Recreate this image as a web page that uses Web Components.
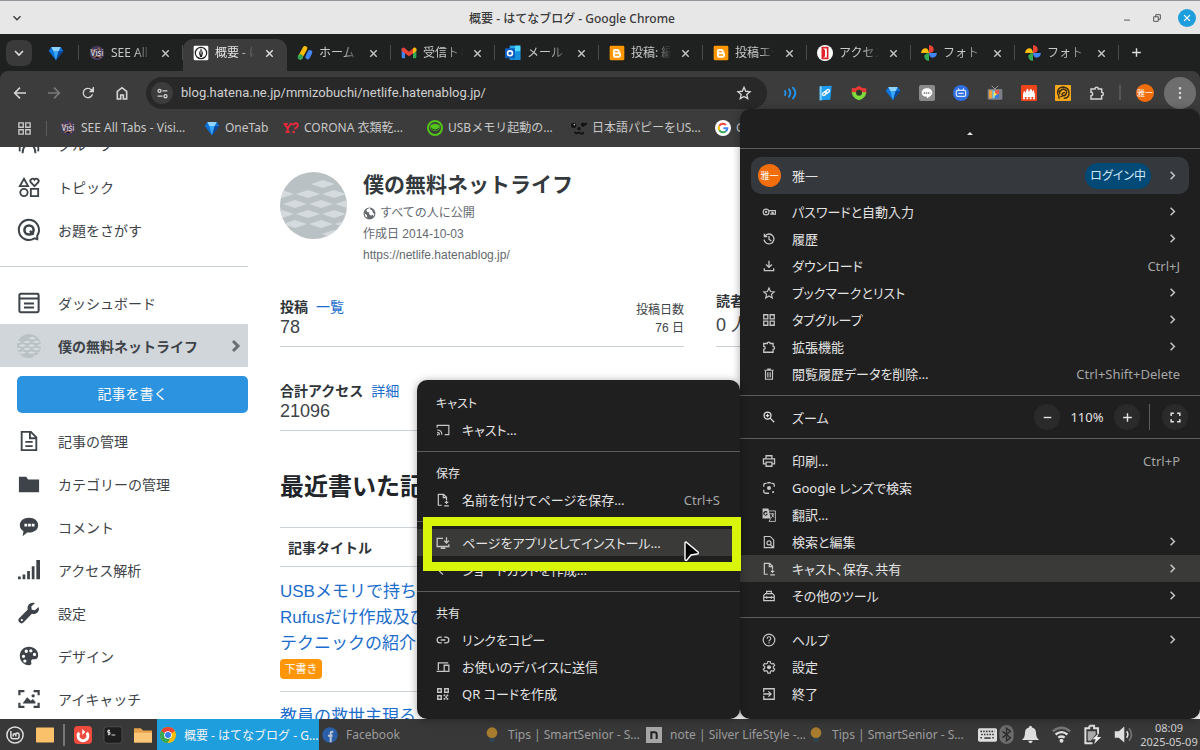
<!DOCTYPE html>
<html lang="ja">
<head>
<meta charset="utf-8">
<title>概要 - はてなブログ</title>
<style>
  :root {
    --ui-font: "Noto Sans", "Noto Sans CJK JP", sans-serif;
    --page-font: "Liberation Sans", "Noto Sans CJK JP", sans-serif;
    --chrome-bg: #3c3c3c;
    --menu-bg: #1f1f1f;
    --menu-line: #5c5c5c;
    --link: #1a6dcc;
  }

  body {
    margin: 0;
    height: 100vh;
    display: flex;
    flex-direction: column;
    position: relative;
    overflow: hidden;
    background: #fff;
    font-family: var(--ui-font);
    font-size: 12px;
  }

  blog-page {
    flex: 1;
    min-height: 0;
  }

  /* everything below floats over the window */
  .app-menu { position: absolute; top: 109px; right: 0; width: 460px; }
  .sub-menu { position: absolute; top: 380px; right: 460px; width: 323px; }
  .app-menu menu-group { --group-top: 8px; }
  click-target { position: absolute; top: 517px; right: 459px; width: 318px; height: 54px; }
  mouse-cursor { position: absolute; top: 541px; right: 500px; }
</style>
</head>
<body>

<title-bar>概要 - はてなブログ - Google Chrome</title-bar>

<tab-strip>
  <browser-tab pinned icon="gem" title="OneTab"></browser-tab>
  <browser-tab icon="visi">SEE All T</browser-tab>
  <browser-tab active icon="hatena">概要 - は</browser-tab>
  <browser-tab icon="adsense">ホーム - </browser-tab>
  <browser-tab icon="gmail">受信トレ</browser-tab>
  <browser-tab icon="outlook">メール - </browser-tab>
  <browser-tab icon="blogger">投稿: 編</browser-tab>
  <browser-tab icon="blogger">投稿エデ</browser-tab>
  <browser-tab icon="access">アクセス</browser-tab>
  <browser-tab icon="photos">フォト - G</browser-tab>
  <browser-tab icon="photos">フォト - G</browser-tab>
</tab-strip>

<tool-bar url="blog.hatena.ne.jp/mmizobuchi/netlife.hatenablog.jp/"></tool-bar>

<bookmark-bar>
  <bookmark-item icon="visi">SEE All Tabs - Visi…</bookmark-item>
  <bookmark-item icon="gem" short>OneTab</bookmark-item>
  <bookmark-item icon="yahoo">CORONA 衣類乾…</bookmark-item>
  <bookmark-item icon="frog">USBメモリ起動の…</bookmark-item>
  <bookmark-item icon="puppy">日本語パピーをUS…</bookmark-item>
  <bookmark-item icon="google">G</bookmark-item>
</bookmark-bar>

<blog-page>
  <side-item slot="nav" icon="group">グループ</side-item>
  <side-item slot="nav" icon="topic">トピック</side-item>
  <side-item slot="nav" icon="odai">お題をさがす</side-item>
  <side-item slot="blog" icon="dashboard">ダッシュボード</side-item>
  <side-item slot="blog" icon="waves" current>僕の無料ネットライフ</side-item>
  <side-item slot="tools" icon="doc">記事の管理</side-item>
  <side-item slot="tools" icon="folder">カテゴリーの管理</side-item>
  <side-item slot="tools" icon="comment">コメント</side-item>
  <side-item slot="tools" icon="bars">アクセス解析</side-item>
  <side-item slot="tools" icon="wrench">設定</side-item>
  <side-item slot="tools" icon="palette">デザイン</side-item>
  <side-item slot="tools" icon="eyecatch">アイキャッチ</side-item>

  <blog-profile></blog-profile>
  <blog-stats></blog-stats>
  <recent-entries></recent-entries>
</blog-page>

<task-bar>
  <task-item icon="chrome" active>概要 - はてなブログ - G…</task-item>
  <task-item icon="facebook">Facebook</task-item>
  <task-item icon="bulb">Tips | SmartSenior - S…</task-item>
  <task-item icon="note">note | Silver LifeStyle -…</task-item>
  <task-item icon="bulb">Tips | SmartSenior - S…</task-item>
</task-bar>

<menu-panel class="app-menu" scrolled>
  <menu-group>
    <profile-row></profile-row>
    <menu-row icon="key" more>パスワードと自動入力</menu-row>
    <menu-row icon="history" more>履歴</menu-row>
    <menu-row icon="download" keys="Ctrl+J">ダウンロード</menu-row>
    <menu-row icon="star" more>ブックマークとリスト</menu-row>
    <menu-row icon="grid" more>タブグループ</menu-row>
    <menu-row icon="puzzle" more>拡張機能</menu-row>
    <menu-row icon="trash" keys="Ctrl+Shift+Delete">閲覧履歴データを削除…</menu-row>
  </menu-group>
  <zoom-row value="110%">ズーム</zoom-row>
  <menu-group>
    <menu-row icon="print" keys="Ctrl+P">印刷…</menu-row>
    <menu-row icon="lens">Google レンズで検索</menu-row>
    <menu-row icon="translate">翻訳…</menu-row>
    <menu-row icon="find" more>検索と編集</menu-row>
    <menu-row icon="savepage" more hot>キャスト、保存、共有</menu-row>
    <menu-row icon="toolbox" more>その他のツール</menu-row>
  </menu-group>
  <menu-group>
    <menu-row icon="help" more>ヘルプ</menu-row>
    <menu-row icon="gear">設定</menu-row>
    <menu-row icon="exit">終了</menu-row>
  </menu-group>
</menu-panel>

<menu-panel class="sub-menu">
  <menu-group heading="キャスト">
    <menu-row icon="cast" compact>キャスト…</menu-row>
  </menu-group>
  <menu-group heading="保存">
    <menu-row icon="savepage" compact keys="Ctrl+S">名前を付けてページを保存…</menu-row>
  </menu-group>
  <menu-group>
    <menu-row icon="install" compact hot>ページをアプリとしてインストール…</menu-row>
    <menu-row icon="shortcut" compact>ショートカットを作成…</menu-row>
  </menu-group>
  <menu-group heading="共有">
    <menu-row icon="link" compact>リンクをコピー</menu-row>
    <menu-row icon="devices" compact>お使いのデバイスに送信</menu-row>
    <menu-row icon="qr" compact>QR コードを作成</menu-row>
  </menu-group>
</menu-panel>

<click-target></click-target>
<mouse-cursor></mouse-cursor>

<script>
const line = (d, w = 2) => `<path d="${d}" fill="none" stroke="currentColor" stroke-width="${w}"/>`;
const solid = (d, c = "currentColor") => `<path d="${d}" fill="${c}" fill-rule="evenodd"/>`;
const rhomb = (x, y) => `M${x - 12} ${y}l12-4 12 4-12 4z`;

// every icon sits in a 24 unit box
const ICONS = {
  // window and toolbar
  chevdown: line("M6 9l6 6 6-6", 2.4),
  chevright: line("M9 6l6 6-6 6", 2.4),
  min: line("M5 17h14", 2),
  restore: line("M4 9h11v11H4zM9 9V4h11v11h-5", 2),
  close: line("M5 5l14 14M19 5L5 19", 3),
  plus: line("M12 4v16M4 12h16", 2.6),
  minus: line("M5 12h14", 2.6),
  back: line("M21 12H4M12 4l-8 8 8 8", 2.4),
  forward: line("M3 12h17M12 4l8 8-8 8", 2.4),
  reload: solid("M17.65 6.35A7.96 7.96 0 0 0 12 4a8 8 0 1 0 7.73 10h-2.08A6 6 0 1 1 12 6c1.66 0 3.14.69 4.22 1.78L13 11h7V4z") + line("M20 3v8", 2),
  home: line("M5 21V9.500l7-5.500 7 5.500V21h-5v-6h-4v6z", 2.4),
  tune: line("M12 7h9M3 17h9", 2.4) + `<circle cx="6.500" cy="7" r="2.800" fill="none" stroke="currentColor" stroke-width="2.400"/><circle cx="17.500" cy="17" r="2.800" fill="none" stroke="currentColor" stroke-width="2.400"/>`,
  star: line("M12 3.500l2.600 5.900 6.400.6-4.850 4.250L17.600 20.500 12 17.200l-5.600 3.300 1.450-6.250L3 10l6.400-.6z", 2),
  puzzle: line("M3 6h6a2.500 2.500 0 0 1 5 0h5v5a2.500 2.500 0 0 1 0 5v5H3v-5a2.500 2.500 0 0 0 0-5z", 2.2),
  dots: solid("M12 3a2 2 0 1 1 0 4 2 2 0 0 1 0-4zm0 7a2 2 0 1 1 0 4 2 2 0 0 1 0-4zm0 7a2 2 0 1 1 0 4 2 2 0 0 1 0-4z"),
  grid: line("M3 3h7v7H3zM14 3h7v7h-7zM3 14h7v7H3zM14 14h7v7h-7z", 2.2),

  // favicons
  gem: solid("M5 3h14l4 6-11 14L1 9z", "#0d72d8") + solid("M5 3h14l-3 6H8z", "#8fd4ff") + solid("M8 9h8l-4 14z", "#39a7f7") + solid("M16 9h7L12 23z", "#08489a"),
  visi: `<circle cx="12" cy="12" r="11" fill="#423858"/><path d="M4 7l6 3M14 4l3 5M7 19l5-3 6 3" stroke="#a8705a" stroke-width="2"/><text x="12" y="17" font-size="12" fill="#e6e6e6" text-anchor="middle">Visi</text>`,
  hatena: `<rect x="1" y="1" width="22" height="22" rx="2" fill="#fff"/><circle cx="12" cy="12" r="8.500" fill="none" stroke="#222" stroke-width="1.800"/><path d="M12 5l3 7-1.500 6h-3L9 12z" fill="#222"/><path d="M12 8v6" stroke="#fff" stroke-width="1.200"/>`,
  adsense: `<g stroke-linecap="round" stroke-width="7"><path d="M12 5L5 18" stroke="#fbbc04"/><path d="M19.500 11L16 18" stroke="#4285f4"/></g><circle cx="5" cy="18" r="4" fill="#34a853"/>`,
  gmail: solid("M1 5h5v15H3q-2 0-2-2z", "#4285f4") + solid("M18 5h5v13q0 2-2 2h-3z", "#34a853") + solid("M1 6q1-3 4-2l7 6 7-6q3-1 4 2v3l-11 8L1 9z", "#ea4335") + solid("M18 5q4-3 5 1v3l-5 4z", "#fbbc04"),
  outlook: solid("M7 1h16v21H7z", "#28a8ea") + solid("M15 1h8v8h-8z", "#50d9ff") + solid("M7 13l16-4v13H7z", "#1490df") + `<rect x="0" y="5" width="15" height="15" rx="1.500" fill="#0a5ebf"/><circle cx="7.500" cy="12.500" r="3.700" fill="none" stroke="#fff" stroke-width="2.300"/>`,
  blogger: `<rect x="1" y="1" width="22" height="22" rx="2" fill="#ff9800"/><path d="M9 6h4a4 4 0 0 1 3 5h1l1 1v3a4 4 0 0 1-4 4H9a3 3 0 0 1-3-3V9a3 3 0 0 1 3-3z" fill="#fff"/><path d="M9.500 10h3M9.500 15h5" stroke="#ff9800" stroke-width="2" stroke-linecap="round"/>`,
  access: `<circle cx="12" cy="12" r="12" fill="#fff"/><path d="M8 4h8v16H8z" fill="none" stroke="#e0222b" stroke-width="2.500"/><path d="M8 4l4 4v9l-4 3z" fill="#e0222b"/>`,
  photos: solid("M12 12V0q7 1 7 7 0 4-7 5z", "#ea4335") + solid("M12 12h12q-1 7-7 7-4 0-5-7z", "#4285f4") + solid("M12 12v12q-7-1-7-7 0-4 7-5z", "#34a853") + solid("M12 12H0q1-7 7-7 4 0 5 7z", "#fbbc04"),
  yahoo: `<path d="M1 6h6M2 6l5 6 5-6M10 6h4M7 12v6M4 18h6" fill="none" stroke="#f0283c" stroke-width="2.800"/><path d="M15 8q1-3 4-3 4 0 3 4-1 3-5 4" fill="none" stroke="#f0283c" stroke-width="3"/><circle cx="16" cy="18" r="2" fill="#f0283c"/>`,
  frog: `<circle cx="12" cy="12" r="10.500" fill="none" stroke="#52c41a" stroke-width="3"/><path d="M5 8q7-5 14 0v5q-7 7-14 0z" fill="#52c41a"/><path d="M6 12q6 6 12 0" fill="none" stroke="#254d12" stroke-width="1.500"/>`,
  puppy: `<g fill="#111"><circle cx="4" cy="8" r="4"/><circle cx="18" cy="7" r="3"/><circle cx="22" cy="6" r="2"/><circle cx="12" cy="13" r="2.500"/><path d="M5 16q4 5 7 1 4 4 8 0l-1 4q-4 2-7-1-4 3-7 0z"/></g><circle cx="5" cy="7" r="1.200" fill="#bbb"/>`,
  google: `<circle cx="12" cy="12" r="12" fill="#fff"/><g fill="none" stroke-width="3"><path d="M6.500 8.500A6.500 6.500 0 0 1 16.500 7.300" stroke="#ea4335"/><path d="M6.500 8.500a6.500 6.500 0 0 0 0 7" stroke="#fbbc04"/><path d="M6.500 15.500A6.500 6.500 0 0 0 16.300 16.900" stroke="#34a853"/><path d="M12.500 12.500h6a6.500 6.500 0 0 1-2.200 4.400" stroke="#4285f4"/></g>`,

  // extensions
  waves3: `<g fill="none" stroke="#2196f3" stroke-width="2.800" stroke-linecap="round"><path d="M3 9q2 3 0 6M9 6.500q4 5.500 0 11M15 4q7 8 0 16"/></g>`,
  linkbook: `<path d="M4 2l18-1-2 21-16 1z" fill="#1e9cf0"/><path d="M4 2h3v21H4z" fill="#7fd0ff"/><g fill="none" stroke="#fff" stroke-width="2"><rect x="8" y="11" width="7" height="4" rx="2" transform="rotate(-35 11 13)"/><rect x="12" y="8" width="7" height="4" rx="2" transform="rotate(-35 15 10)"/></g>`,
  shield: solid("M1 5q7 0 11-4 4 4 11 4v7H1z", "#e53935") + solid("M1 11h22q-1 9-11 12Q2 20 1 11z", "#7edc3c") + `<circle cx="12" cy="11.500" r="4.500" fill="#2b3a2b"/>`,
  line: `<rect width="24" height="24" rx="3" fill="#8b8b8b"/><path d="M12 5c5 0 8 3 8 6.500S15 18 12 20v-2.500c-5 0-8-2.500-8-6S7 5 12 5z" fill="#fff"/><path d="M7 12h10" stroke="#777" stroke-width="2.500" stroke-dasharray="2 1"/>`,
  robot: `<circle cx="12" cy="12" r="12" fill="#2f6fe0"/><rect x="5" y="8" width="14" height="9" rx="2" fill="none" stroke="#dce8ff" stroke-width="1.800"/><path d="M8 12.500h8M8 5l1 3M16 5l-1 3" stroke="#dce8ff" stroke-width="1.800"/>`,
  tv: `<path d="M7 1l5 5 5-5" fill="none" stroke="#999" stroke-width="1.500"/><rect x="1" y="6" width="22" height="16" rx="2" fill="#7d7f86"/><path d="M3 8h5v12H3z" fill="#f2a23c"/><path d="M8 8h4v12H8z" fill="#6ec6e8"/><path d="M12 8h6v6h-6z" fill="#e95c4b"/><path d="M12 14h6v6h-6z" fill="#3c7cd8"/><path d="M10 10l5 4-5 4z" fill="#f7e463"/>`,
  meter: `<rect width="24" height="24" rx="2" fill="#f0441c"/><path d="M3 15q1-8 3-5l1 2q2-9 4-5l1 4q2-8 4-4l1 3 2-3 2 8v3H3z" fill="#fff"/><path d="M3 20h18" stroke="#fff" stroke-width="3" stroke-dasharray="3 2"/>`,
  brain: `<rect width="24" height="24" rx="1" fill="#f5a81c"/><g fill="none" stroke="#3a2a10" stroke-width="2"><path d="M6 21q1-4-2-8Q3 4 12 3q9 1 9 9 0 8-8 8"/><path d="M7 14q-1-7 6-8 6 2 4 7-2 4-5 3-3-2 0-4l3-1M8 18l4-2M5 10l6-3"/></g>`,

  // blog sidebar
  group: `<circle cx="12" cy="7" r="4" fill="none" stroke="currentColor" stroke-width="2"/>` + line("M5 22q0-9 7-9t7 9M2 20q-1-7 3-10M22 20q1-7-3-10"),
  topic: line("M6.500 3l4.500 8H2z", 2) + `<circle cx="6.500" cy="18" r="4" fill="none" stroke="currentColor" stroke-width="2"/>` + line("M14 14h8v8h-8zM18 11l-4-4a2.400 2.400 0 0 1 4-3 2.400 2.400 0 0 1 4 3z"),
  odai: line("M18 21a11 11 0 1 1 3-3v4z", 2.2) + `<circle cx="12" cy="12" r="5" fill="none" stroke="currentColor" stroke-width="2.800"/>` + line("M13 13l4 4", 2.6),
  dashboard: `<rect x="1.500" y="2" width="21" height="20" rx="1.500" fill="none" stroke="currentColor" stroke-width="2.200"/>` + line("M2 7h20M6.500 12.500h11M6.500 17h11", 2.2),
  waves: `<clipPath id="c"><circle cx="33.500" cy="33.500" r="33.500"/></clipPath><g transform="scale(.3582)" clip-path="url(#c)"><path d="M0 0h67v67H0z" fill="#b9c1c5"/><path fill="#d5dade" d="${[[43, 12], [2, 22], [28, 22], [54, 22], [15, 32], [41, 32], [67, 32], [2, 42], [28, 42], [54, 42], [15, 52], [41, 52], [67, 52], [54, 62]].map(p => rhomb(...p)).join("")}"/></g>`,
  doc: line("M4 2h10l6 6v14H4zM13 2v7h7M8 13h8M8 17.500h8", 2),
  folder: solid("M1 4h8l2 3h12v14H1z"),
  comment: solid("M12 2c6 0 10 3.500 10 8s-4 8-10 8l-2 0-5 4 1-5.500C3.500 15 2 13 2 10c0-4.500 4-8 10-8zM7 8.500v3h3v-3zm4 0v3h3v-3zm4 0v3h3v-3z"),
  bars: solid("M0 19h3v3H0zm5-2h3v5H5zm5-4h3v9h-3zm5-5h3v14h-3zm5-7h4v21h-4z"),
  wrench: solid("M22.500 5.500L18.500 9l-3.500-.5L14.500 5l4-3.700c-3-1-6 0-7.500 2.700-.8 1.500-.8 3-.3 4.300L1.500 17.500a3 3 0 0 0 4.700 4.700l9-9.300c4 1.300 9-2 7.300-7.400zM4.200 18.500a1.200 1.200 0 1 1 0 2.400 1.200 1.200 0 0 1 0-2.400z"),
  palette: solid("M12 2C6 2 2 6.500 2 12s4 10 10 10c2 0 3-1 2.500-3-.5-2 0-3.500 2-3.500H19c2 0 3-2 3-4.500C22 6 18 2 12 2zM6 10.500a1.800 1.800 0 1 1 0 3.600 1.800 1.800 0 0 1 0-3.600zm1.500 5.200a1.800 1.800 0 1 1 0 3.600 1.800 1.800 0 0 1 0-3.600zM9 5a1.800 1.800 0 1 1 0 3.600A1.800 1.800 0 0 1 9 5zm5-.5a1.800 1.800 0 1 1 0 3.600 1.800 1.800 0 0 1 0-3.600zm4 4a1.800 1.800 0 1 1 0 3.600 1.800 1.800 0 0 1 0-3.600z"),
  eyecatch: line("M1.500 8V3.500H7M17 3.500h5.500V8M22.500 16v4.500H17M7 20.500H1.500V16", 2.4) + solid("M5 17l5-7 4 4 2-2 3 3v2z") + `<circle cx="16.500" cy="8.500" r="1.800" fill="currentColor"/>`,
  globe: solid("M12 1a11 11 0 1 1 0 22 11 11 0 0 1 0-22zM9 3L6 6l2 3 4 1-1 3 4 3 3-2 1 4 2-5-3-3-1-4-3-1-1-3zM3 11l4 4 1 5-4-3z"),

  // menu
  key: `<circle cx="7" cy="12" r="5" fill="none" stroke="currentColor" stroke-width="2"/><circle cx="7" cy="12" r="2" fill="currentColor"/>` + line("M12 9.500h11v6h-4v-3h-2v3h-3", 2),
  history: line("M5 7a8.500 8.500 0 1 1-1.500 6M4 3v5h5M12 7v5.500l4 3", 2.2),
  download: line("M12 3v11M7 9.500l5 5 5-5M4 16v4h16v-4", 2.2),
  trash: line("M6 7v14h12V7M4 5.500h16M9 3.500h6M10 9v9M14 9v9", 2),
  zoomin: `<circle cx="9.500" cy="9.500" r="6" fill="none" stroke="currentColor" stroke-width="2.200"/>` + line("M14 14l7 7M9.500 6.500v6M6.500 9.500h6", 2),
  full: line("M4 9V4h5M15 4h5v5M20 15v5h-5M9 20H4v-5", 2.8),
  print: line("M7 8V3h10v5M6 17H2.500V8.500h19V17H18M7 14h10v7H7z", 2.2),
  lens: line("M8 4H6a3 3 0 0 0-3 3v3M16 4h2a3 3 0 0 1 3 3v3M3 15v3a3 3 0 0 0 3 3h6M9 3h6", 2.2) + `<circle cx="12" cy="12" r="3.500" fill="currentColor"/><circle cx="19" cy="19" r="1.800" fill="currentColor"/>`,
  translate: solid("M1 1h10l4 17H1zM9.500 7A4 4 0 1 0 10 10H6.500v1.500h1.700A2.300 2.300 0 1 1 8 8z") + line("M12 5h11v18H12l3-5M13 10h8M17 9q1 6 4 7M20 11q-1 4-5 6", 1.5),
  find: line("M4 2.500h10l6 6v13H4z", 2) + `<circle cx="12" cy="13.500" r="3.500" fill="none" stroke="currentColor" stroke-width="2"/>` + line("M14 16l5 5", 2),
  savepage: line("M10 21H4V2.500h9l5 5V12M12.500 3v5H18M18 13v6M15 16h6M14 22h8", 2.1),
  toolbox: line("M3 20V11l3-3h12l3 3v9zM8 8V4h8v4M3 14.500h18M8 12.500v4M16 12.500v4", 2.1),
  help: `<circle cx="12" cy="12" r="10" fill="none" stroke="currentColor" stroke-width="2"/>` + line("M9 10q0-3.500 3-3.500t3 3q0 1.500-1.500 2.500T12 14.500M12 16v2.200", 1.900),
  gear: line("M10 2.500h4l.6 3 2.200 1.300 2.900-1 2 3.500-2.300 2v2.400l2.300 2-2 3.500-2.900-1-2.200 1.300-.6 3h-4l-.6-3-2.200-1.300-2.900 1-2-3.500 2.300-2v-2.400l-2.300-2 2-3.500 2.900 1 2.200-1.300z", 2) + `<circle cx="12" cy="12.500" r="3.500" fill="currentColor"/>`,
  exit: line("M3 9V3h18v18H3v-6M2 12h13M11 7.500l4.500 4.500-4.500 4.500", 2.2),
  cast: line("M2 8V4h20v16h-7M2 12q8 0 8 8M2 16q4 0 4 4", 2) + `<circle cx="3" cy="20" r="1.500" fill="currentColor"/>`,
  install: line("M12 4H2v14h20v-4M8 21h8M18 2v9M14 8l4 4 4-4", 2.2),
  shortcut: line("M6 4v10l6 6", 2.2),
  link: line("M10 7H7a5 5 0 0 0 0 10h3M14 7h3a5 5 0 0 1 0 10h-3M8 12h8", 2.2),
  devices: line("M4 17V5h17M1 19.500h12M14 9h8v10.500h-8z", 2.2),
  qr: line("M3 3h6v6H3zM15 3h6v6h-6zM3 15h6v6H3z", 2.4) + solid("M13 13h3v3h-3zm5 0h3v3h-3zm-2 3h3v3h-3zm-3 3h3v3h-3zm5 0h3v3h-3z"),

  // task bar
  mint: `<circle cx="12" cy="12" r="10.800" fill="none" stroke="#dedede" stroke-width="2"/><path d="M6.500 6.500v7.500q0 3 3 3h5q3 0 3-3v-2.500a2.200 2.200 0 0 0-4.400 0V14M13.100 11.500a2 2 0 0 0-3.500 0V14" fill="none" stroke="#dedede" stroke-width="2"/>`,
  square: `<rect x="0" y="2" width="24" height="20" rx="1" fill="#fbc06a"/>`,
  redring: `<rect width="24" height="24" rx="5" fill="#ee4b3e"/><path d="M7 9a6.500 6.500 0 1 0 10 0" fill="none" stroke="#fff" stroke-width="4"/><path d="M11 4l4 4-4 4z" fill="#fff"/>`,
  terminal: `<rect y="1" width="24" height="22" rx="4" fill="#1d1d1d" stroke="#555"/><path d="M8 6H5v2.500h3V11H5M6.500 4.500v8M10 12h5" fill="none" stroke="#ddd" stroke-width="1.300"/>`,
  files: solid("M0 3h9l3 3h12v16H0z", "#e6a24c") + solid("M0 9h24v13H0z", "#fbc678"),
  chrome: `<circle cx="12" cy="12" r="12" fill="#fbbc04"/>` + solid("M12 12L1.600 6A12 12 0 0 1 22.400 6z", "#ea4335") + solid("M12 12L1.600 6A12 12 0 0 0 11 24l6-9z", "#34a853") + `<circle cx="12" cy="12" r="5.800" fill="#fff"/><circle cx="12" cy="12" r="4.500" fill="#3b7ded"/>`,
  facebook: `<circle cx="12" cy="12" r="11.500" fill="#2a5fa8"/><path d="M17 7h-2q-2 0-2 2v14M9 13h7" fill="none" stroke="#b8c4d4" stroke-width="3"/>`,
  bulb: `<circle cx="12" cy="8.500" r="8" fill="#a87c2e"/><path d="M8 18h8M9 21h6" stroke="#2b4a5c" stroke-width="2"/>`,
  note: `<rect width="24" height="24" fill="#a6a6a6"/><path d="M8 18V8h5q3 0 3 3v7" fill="none" stroke="#222" stroke-width="3"/>`,
  keyboard: `<rect x="0" y="4" width="24" height="17" rx="2" fill="#dedede"/><path d="M3 8h18M4 12h17M3 16h3M18 16h3" stroke="#3a3a3a" stroke-width="2" stroke-dasharray="2 1.500"/><path d="M8 16.500h8" stroke="#3a3a3a" stroke-width="2"/>`,
  bluetooth: `<rect x="3" y="0" width="18" height="24" rx="9" fill="#6c6c6c"/><path d="M7 8l10 8-5 4V4l5 4-10 8" fill="none" stroke="#2e2e2e" stroke-width="1.800"/>`,
  bell: `<path d="M12 1q2 0 2 2 5 1 5 7 0 6 4 9H1q4-3 4-9 0-6 5-7 0-2 2-2zM9 20h6q-1 3-3 3t-3-3z" fill="#dedede"/>`,
  wifi: `<path d="M1 8q11-9 22 0" fill="none" stroke="#777" stroke-width="3"/><path d="M4.500 12q7.500-6 15 0M8 16q4-3 8 0" fill="none" stroke="#dedede" stroke-width="3"/><circle cx="12" cy="20" r="2.500" fill="#dedede"/>`,
  battery: `<path d="M8 1h6v3h5v7M12 23H3V4h5V1" fill="none" stroke="#dedede" stroke-width="2.500"/><path d="M6 8h10v4l-6 8H6z" fill="#aaa"/><path d="M20 10l-8 8h4l-2 6 9-9h-5z" fill="#eee"/>`,
  volume: `<path d="M1 8h5l7-6v20l-7-6H1z" fill="#dedede"/><path d="M16 8q3 4 0 8" fill="none" stroke="#dedede" stroke-width="2"/><path d="M19 4q6 8 0 16" fill="none" stroke="#777" stroke-width="2"/>`
};

// small helper: each element is a shadow root filled from one markup function
const define = (tag, render) => {
  customElements.define(tag, class extends HTMLElement {
    constructor() {
      super();
      this.attachShadow({ mode: "open" });
    }

    connectedCallback() {
      const temp = document.createElement("template");
      temp.innerHTML = render(this);
      this.shadowRoot.replaceChildren(temp.content.cloneNode(true));
    }
  });
};

define("ui-icon", el => `
<style>
  :host { display: inline-block; flex: none; width: var(--icon, 16px); height: var(--icon, 16px); }
  svg { display: block; width: 100%; height: 100%; overflow: visible; }
</style>
<svg viewBox="0 0 24 24" aria-hidden="true">${ICONS[el.getAttribute("name")] || ""}</svg>
`);

define("title-bar", () => `
<style>
  :host {
    display: flex;
    align-items: center;
    flex: none;
    height: 34px;
    box-sizing: border-box;
    border-top: 1px solid #94949a;
    background: #e7e7e7;
    color: #3a3a3a;
  }
  .left { width: 34px; display: flex; justify-content: center; --icon: 14px; }
  h1 { flex: 1; margin: 0; font-size: 12px; font-weight: 500; text-align: center; white-space: nowrap; }
  .right { width: 86px; padding-right: 4px; display: flex; justify-content: flex-end; gap: 12px; --icon: 10px; }
  button { all: unset; width: 18px; height: 18px; display: grid; place-items: center; }
  .close { border-radius: 50%; background: #1f9ede; color: #fff; }
</style>
<div class="left"><button aria-label="menu"><ui-icon name="chevdown"></ui-icon></button></div>
<h1><slot></slot></h1>
<div class="right">
  <button aria-label="minimize"><ui-icon name="min"></ui-icon></button>
  <button aria-label="restore"><ui-icon name="restore"></ui-icon></button>
  <button class="close" aria-label="close"><ui-icon name="close"></ui-icon></button>
</div>
`);

// runs on under the toolbar so that its round corners show the strip
define("tab-strip", () => `
<style>
  :host { display: flex; flex: none; align-items: center; height: 37px; padding: 0 0 8px 6px; margin-bottom: -8px; background: #1f2020; color: #ddd; }
  button { all: unset; flex: none; display: grid; place-items: center; width: 26px; height: 26px; border-radius: 8px; }
  .search { background: #3a3a3a; --icon: 16px; }
  .new { margin-left: 4px; --icon: 13px; }
</style>
<button class="search" aria-label="search tabs"><ui-icon name="chevdown"></ui-icon></button>
<slot></slot>
<button class="new" aria-label="new tab"><ui-icon name="plus"></ui-icon></button>
`);

define("browser-tab", el => `
<style>
  :host {
    display: flex;
    align-items: center;
    flex: 0 1 104px;
    min-width: 0;
    height: 32px;
    align-self: flex-end;
    box-sizing: border-box;
    padding: 0 10px 4px;
    gap: 6px;
    position: relative;
    color: #c8c8c8;
  }
  :host::after { content: ""; position: absolute; right: 0; top: 6px; width: 1px; height: 15px; background: #4a4a4a; }
  :host([pinned]) { flex: none; width: 47px; justify-content: center; }
  :host([active]) { background: var(--chrome-bg); border-radius: 10px 10px 0 0; color: #e3e3e3; }
  :host([active])::after { display: none; }
  .text {
    flex: 1;
    min-width: 0;
    overflow: hidden;
    white-space: nowrap;
    line-height: 20px;
    -webkit-mask-image: linear-gradient(90deg, #000 60%, transparent);
    mask-image: linear-gradient(90deg, #000 60%, transparent);
  }
  button { all: unset; display: grid; place-items: center; width: 16px; height: 16px; --icon: 11px; }
</style>
<ui-icon name="${el.getAttribute("icon")}"></ui-icon>
${el.hasAttribute("pinned") ? "" : `<span class="text"><slot></slot></span>
<button aria-label="close tab"><ui-icon name="close"></ui-icon></button>`}
`);

define("tool-bar", el => `
<style>
  :host {
    display: flex;
    align-items: center;
    flex: none;
    height: 38px;
    padding: 0 4px 0 12px;
    background: var(--chrome-bg);
    border-radius: 8px 8px 0 0;
    color: #d6d6d6;
    position: relative;
  }
  button { all: unset; flex: none; display: grid; place-items: center; }
  nav, .ext { display: flex; gap: 18px; margin-top: 5px; }
  .off { color: #7a7a7a; }
  .omni {
    flex: 1;
    display: flex;
    align-items: center;
    align-self: flex-end;
    height: 32px;
    margin: 0 16px;
    box-sizing: border-box;
    padding: 0 15px 0 5px;
    border-radius: 16px;
    background: #282828;
  }
  .tune { width: 22px; height: 22px; border-radius: 50%; background: #3c3c3c; --icon: 13px; }
  input { all: unset; flex: 1; min-width: 0; padding-left: 8px; font-family: Roboto, var(--ui-font); font-size: 13px; line-height: 20px; color: #d0d0d0; }
  i { width: 2px; height: 15px; margin: 5px 15px 0 14px; background: #565656; }
  .me {
    width: 18px; height: 18px; margin: 5px 10px 0 0;
    border-radius: 50%; background: #f26d0c; color: #fff; font-size: 8px; line-height: 18px; white-space: nowrap;
  }
  .more { width: 32px; height: 32px; border-radius: 50%; background: #6e6e6e; align-self: flex-end; }
</style>
<nav>
  <button aria-label="back"><ui-icon name="back"></ui-icon></button>
  <button aria-label="forward" class="off"><ui-icon name="forward"></ui-icon></button>
  <button aria-label="reload"><ui-icon name="reload"></ui-icon></button>
  <button aria-label="home"><ui-icon name="home"></ui-icon></button>
</nav>
<div class="omni">
  <button class="tune" aria-label="site information"><ui-icon name="tune"></ui-icon></button>
  <input type="text" aria-label="address" value="${el.getAttribute("url")}">
  <button aria-label="bookmark"><ui-icon name="star"></ui-icon></button>
</div>
<div class="ext">
  ${["waves3", "linkbook", "shield", "gem", "line", "robot", "tv", "meter", "brain", "puzzle"].map(n => `<button aria-label="${n}"><ui-icon name="${n}"></ui-icon></button>`).join("")}
</div>
<i></i>
<button class="me">雅一</button>
<button class="more" aria-label="menu"><ui-icon name="dots"></ui-icon></button>
`);

define("bookmark-bar", () => `
<style>
  :host { display: flex; flex: none; align-items: center; height: 38px; padding-left: 17px; background: var(--chrome-bg); color: #c8c8c8; overflow: hidden; }
  button { all: unset; flex: none; display: grid; --icon: 15px; }
  i { flex: none; width: 1px; height: 15px; margin: 0 13px 0 14px; background: #5c5c5c; }
</style>
<button aria-label="apps"><ui-icon name="grid"></ui-icon></button>
<i></i>
<slot></slot>
`);

define("bookmark-item", el => `
<style>
  :host { display: block; flex: none; width: 144px; white-space: nowrap; }
  :host([short]) { width: 79px; }
  a { display: flex; align-items: center; gap: 5px; color: inherit; text-decoration: none; line-height: 20px; }
</style>
<a href="#"><ui-icon name="${el.getAttribute("icon")}"></ui-icon><slot></slot></a>
`);

define("blog-page", () => `
<style>
  :host { display: flex; overflow: hidden; background: #fff; font-family: var(--page-font); font-size: 14px; color: #3d4348; }
  /* the list is scrolled down by part of a row */
  aside { flex: none; width: 248px; margin-top: -25px; }
  nav, .blog { display: block; }
  hr { border: 0; height: 1px; background: #ccd3d8; margin: 15px 0 14px; }
  .write {
    display: block; margin: 9px 0 6px 17px; border-radius: 5px; background: #2c93e0;
    color: #fff; text-align: center; text-decoration: none; line-height: 37px;
  }
  main { flex: 1; min-width: 0; padding: 25px 0 0 32px; }
</style>
<aside>
  <nav><slot name="nav"></slot></nav>
  <hr>
  <div class="blog"><slot name="blog"></slot></div>
  <a class="write" href="#">記事を書く</a>
  <nav><slot name="tools"></slot></nav>
</aside>
<main><slot></slot></main>
`);

define("side-item", el => `
<style>
  :host { display: block; --icon: 22px; }
  :host([current]) { background: #d1d6da; font-weight: bold; --icon: 24px; }
  a { display: flex; align-items: center; gap: 18px; height: 43px; padding: 0 5px 0 18px; color: inherit; text-decoration: none; }
  :host([current]) a { gap: 17px; padding-left: 17px; }
  span { flex: 1; }
</style>
<a href="#">
  <ui-icon name="${el.getAttribute("icon")}"></ui-icon>
  <span><slot></slot></span>
  ${el.hasAttribute("current") ? `<svg width="14" height="16" viewBox="0 0 14 16"><path d="M4 3l5 5-5 5" fill="none" stroke="#686e73" stroke-width="3"/></svg>` : ""}
</a>
`);

define("blog-profile", () => `
<style>
  :host { display: flex; gap: 16px; --icon: 67px; }
  h2 { margin: 0; font-size: 21px; line-height: 26px; color: #33393d; white-space: nowrap; }
  p { margin: 0; display: flex; align-items: center; gap: 4px; font-size: 12px; line-height: 21px; color: #63696e; --icon: 13px; }
  h2 + p { margin-top: 5px; }
  a { color: inherit; text-decoration: none; }
</style>
<ui-icon name="waves"></ui-icon>
<div>
  <h2>僕の無料ネットライフ</h2>
  <p><ui-icon name="globe"></ui-icon>すべての人に公開</p>
  <p>作成日 2014-10-03</p>
  <p><a href="#">https://netlife.hatenablog.jp/</a></p>
</div>
`);

define("blog-stats", () => `
<style>
  :host { display: grid; grid-template-columns: 404px 404px; gap: 0 32px; margin-top: 19px; overflow: hidden; white-space: nowrap; }
  section { display: flex; justify-content: space-between; align-items: flex-end; height: 84px; box-sizing: border-box; padding-bottom: 9px; border-bottom: 1px solid #ccd3d8; }
  section:nth-of-type(-n+2) { height: 62px; }
  b { color: #2e3438; }
  a { margin-left: 8px; color: var(--link); text-decoration: none; }
  p { margin: 0; line-height: 20px; }
  .tall p { line-height: 24px; }
  .num { font-size: 18px; }
  .side { text-align: right; font-size: 12px; line-height: 18px; }
</style>
<section>
  <div><p><b>投稿</b><a href="#">一覧</a></p><p class="num">78</p></div>
  <div class="side">投稿日数<br>76 日</div>
</section>
<section class="tall">
  <div><p><b>読者</b></p><p class="num">0 人</p></div>
</section>
<section>
  <div><p><b>合計アクセス</b><a href="#">詳細</a></p><p class="num">21096</p></div>
</section>
`);

define("recent-entries", () => `
<style>
  :host { display: block; }
  h2 { margin: 38px 0 22px; font-size: 24px; line-height: 36px; color: #212529; }
  table { width: 100%; border-collapse: collapse; }
  th { padding: 0 8px; height: 38px; text-align: left; border-top: 1px solid #ccd3d8; border-bottom: 1px solid #ccd3d8; color: #2e3438; }
  td { padding: 12px 0; border-bottom: 1px solid #ccd3d8; font-size: 17px; line-height: 26px; white-space: nowrap; }
  td a { display: block; color: var(--link); text-decoration: none; }
  span { display: block; width: 42px; margin-top: 2px; border-radius: 4px; background: #ff960a; color: #fff; font-size: 11px; line-height: 20px; text-align: center; }
</style>
<h2>最近書いた記事</h2>
<table>
  <tr><th>記事タイトル</th></tr>
  <tr><td><a href="#">USBメモリで持ち<br>Rufusだけ作成及び<br>テクニックの紹介</a><span>下書き</span></td></tr>
  <tr><td><a href="#">教員の救世主現る</a></td></tr>
</table>
`);

define("menu-panel", el => `
<style>
  :host {
    display: block;
    box-sizing: border-box;
    padding-bottom: 4px;
    border-radius: 10px;
    background: var(--menu-bg);
    color: #e3e3e3;
    font-size: 13px;
    font-feature-settings: "palt";
    box-shadow: 0 1px 8px rgba(0, 0, 0, .35);
    overflow: hidden;
  }
  :host(:not([scrolled])) { padding-top: 2px; }
  .up { display: grid; place-items: center; height: 40px; padding-top: 9px; box-sizing: border-box; border-bottom: 1px solid var(--menu-line); }
  .up::after { content: ""; border: 3px solid transparent; border-top: 0; border-bottom-color: #e3e3e3; }
</style>
${el.hasAttribute("scrolled") ? `<div class="up"></div>` : ""}
<slot></slot>
`);

define("menu-group", el => `
<style>
  :host { display: block; padding: var(--group-top, 7px) 0 8px; }
  :host(:not(:first-child)) { border-top: 1px solid var(--menu-line); }
  h3 { margin: 0; padding: 2px 0 0 19px; font-size: 12px; font-weight: normal; line-height: 25px; }
</style>
${el.hasAttribute("heading") ? `<h3>${el.getAttribute("heading")}</h3>` : ""}
<slot></slot>
`);

define("menu-row", el => `
<style>
  :host { display: block; --icon: 14px; }
  :host([hot]) { background: #3a3a39; }
  button { all: unset; display: flex; align-items: center; width: 100%; height: 27px; box-sizing: border-box; padding: 0 20px 0 22px; white-space: nowrap; }
  ui-icon { color: #c7c7c7; }
  span { flex: 1; padding-left: 16px; }
  :host([compact]) button { padding-left: 19px; }
  :host([compact]) span { padding-left: 12px; }
  kbd { font: inherit; color: #a5a5a5; }
  .more { --icon: 15px; }
</style>
<button>
  <ui-icon name="${el.getAttribute("icon")}"></ui-icon>
  <span><slot></slot></span>
  ${el.hasAttribute("keys") ? `<kbd>${el.getAttribute("keys")}</kbd>` : ""}
  ${el.hasAttribute("more") ? `<ui-icon class="more" name="chevright"></ui-icon>` : ""}
</button>
`);

define("profile-row", () => `
<style>
  :host { display: block; margin: 0 11px 4px; }
  button { all: unset; display: flex; align-items: center; width: 100%; height: 37px; box-sizing: border-box; padding: 0 9px 0 7px; border-radius: 10px; background: #35383c; }
  .face { width: 23px; border-radius: 50%; background: #f26d0c; color: #fff; font-size: 9px; line-height: 23px; text-align: center; white-space: nowrap; }
  .name { flex: 1; padding-left: 11px; }
  .state { margin-right: 14px; padding: 0 5px; border-radius: 13px; background: #004a77; color: #d3e8fb; font-size: 12px; line-height: 26px; }
  ui-icon { --icon: 15px; color: #c7c7c7; }
</style>
<button>
  <span class="face">雅一</span>
  <span class="name">雅一</span>
  <span class="state">ログイン中</span>
  <ui-icon name="chevright"></ui-icon>
</button>
`);

define("zoom-row", el => `
<style>
  :host { display: flex; align-items: center; height: 42px; padding: 0 12px 0 22px; border-top: 1px solid var(--menu-line); --icon: 14px; }
  .label { flex: 1; padding-left: 16px; }
  output { width: 54px; text-align: center; }
  button { all: unset; display: grid; place-items: center; width: 26px; height: 26px; border-radius: 50%; background: #2a2a2a; --icon: 13px; }
  i { width: 1px; height: 26px; margin: 0 12px 0 9px; background: var(--menu-line); }
</style>
<ui-icon name="zoomin"></ui-icon>
<span class="label"><slot></slot></span>
<button aria-label="zoom out"><ui-icon name="minus"></ui-icon></button>
<output>${el.getAttribute("value")}</output>
<button aria-label="zoom in"><ui-icon name="plus"></ui-icon></button>
<i></i>
<button aria-label="full screen"><ui-icon name="full"></ui-icon></button>
`);

define("task-bar", () => `
<style>
  :host { display: flex; flex: none; align-items: center; height: 31px; background: #383838; color: #9c9c9c; }
  .launch { flex: none; display: flex; align-items: center; gap: 12px; width: 157px; box-sizing: border-box; padding-left: 6px; --icon: 18px; }
  button { all: unset; display: grid; }
  .launch i { width: 2px; height: 22px; margin: 0 -3px; background: #777; }
  .tasks { flex: 1; min-width: 0; display: flex; }
  .tray { flex: none; display: flex; align-items: center; gap: 12px; --icon: 19px; }
  .pair { display: flex; margin-right: -7px; }
  time { width: 62px; margin-left: -7px; text-align: center; font-size: 11px; line-height: 14px; color: #d0d0d0; white-space: nowrap; }
</style>
<div class="launch">
  <button aria-label="menu"><ui-icon name="mint"></ui-icon></button>
  <button aria-label="desktop"><ui-icon name="square"></ui-icon></button>
  <i></i>
  <button aria-label="browser"><ui-icon name="redring"></ui-icon></button>
  <button aria-label="terminal"><ui-icon name="terminal"></ui-icon></button>
  <button aria-label="files"><ui-icon name="files"></ui-icon></button>
</div>
<div class="tasks"><slot></slot></div>
<div class="tray">
  <span class="pair"><ui-icon name="keyboard"></ui-icon><ui-icon name="bluetooth"></ui-icon></span>
  <ui-icon name="bell"></ui-icon>
  <ui-icon name="wifi"></ui-icon>
  <ui-icon name="battery"></ui-icon>
  <ui-icon name="volume"></ui-icon>
  <time datetime="2025-05-09T08:09">08:09<br>2025-05-09</time>
</div>
`);

define("task-item", el => `
<style>
  :host { display: block; flex: 0 1 162px; min-width: 0; }
  button { all: unset; display: flex; align-items: center; gap: 8px; width: 100%; height: 31px; box-sizing: border-box; padding-left: 3px; white-space: nowrap; overflow: hidden; }
  :host([active]) { background: #1f9ede; color: #f4f4f4; }
</style>
<button><ui-icon name="${el.getAttribute("icon")}"></ui-icon><slot></slot></button>
`);

define("click-target", () => `
<style>
  :host { display: block; box-sizing: border-box; border: 9px solid #d9f50a; pointer-events: none; }
</style>
`);

define("mouse-cursor", () => `
<style>
  :host { display: block; pointer-events: none; }
  svg { display: block; }
</style>
<svg width="17" height="22" viewBox="0 0 17 22" aria-hidden="true">
  <path d="M2 2q0-1 1-1l12 10q1 2-1 2l-6 1-4 5q-2 1-2-1z" fill="#000" stroke="#fff" stroke-width="1.400"/>
</svg>
`);
</script>
</body>
</html>
